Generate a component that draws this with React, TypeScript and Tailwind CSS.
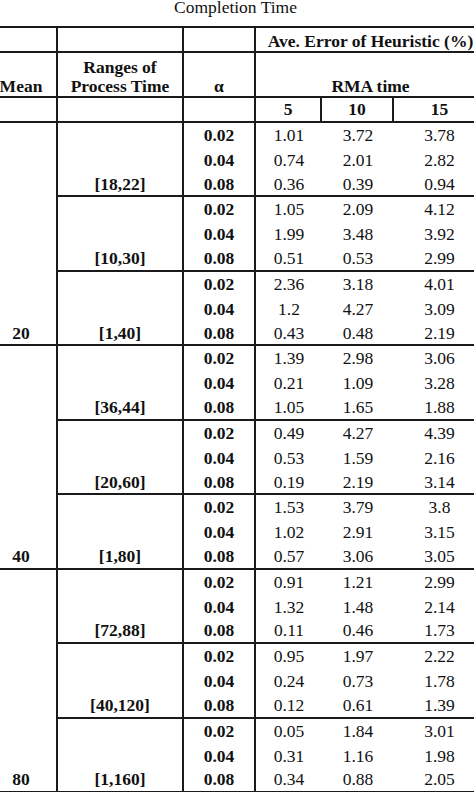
import React from "react";

type Group = { range: string; rows: [string, string, string, string][] };
type MeanGroup = { mean: string; groups: Group[] };

const data: MeanGroup[] = [
  {
    mean: "20",
    groups: [
      { range: "[18,22]", rows: [["0.02", "1.01", "3.72", "3.78"], ["0.04", "0.74", "2.01", "2.82"], ["0.08", "0.36", "0.39", "0.94"]] },
      { range: "[10,30]", rows: [["0.02", "1.05", "2.09", "4.12"], ["0.04", "1.99", "3.48", "3.92"], ["0.08", "0.51", "0.53", "2.99"]] },
      { range: "[1,40]", rows: [["0.02", "2.36", "3.18", "4.01"], ["0.04", "1.2", "4.27", "3.09"], ["0.08", "0.43", "0.48", "2.19"]] },
    ],
  },
  {
    mean: "40",
    groups: [
      { range: "[36,44]", rows: [["0.02", "1.39", "2.98", "3.06"], ["0.04", "0.21", "1.09", "3.28"], ["0.08", "1.05", "1.65", "1.88"]] },
      { range: "[20,60]", rows: [["0.02", "0.49", "4.27", "4.39"], ["0.04", "0.53", "1.59", "2.16"], ["0.08", "0.19", "2.19", "3.14"]] },
      { range: "[1,80]", rows: [["0.02", "1.53", "3.79", "3.8"], ["0.04", "1.02", "2.91", "3.15"], ["0.08", "0.57", "3.06", "3.05"]] },
    ],
  },
  {
    mean: "80",
    groups: [
      { range: "[72,88]", rows: [["0.02", "0.91", "1.21", "2.99"], ["0.04", "1.32", "1.48", "2.14"], ["0.08", "0.11", "0.46", "1.73"]] },
      { range: "[40,120]", rows: [["0.02", "0.95", "1.97", "2.22"], ["0.04", "0.24", "0.73", "1.78"], ["0.08", "0.12", "0.61", "1.39"]] },
      { range: "[1,160]", rows: [["0.02", "0.05", "1.84", "3.01"], ["0.04", "0.31", "1.16", "1.98"], ["0.08", "0.34", "0.88", "2.05"]] },
    ],
  },
];

export default function App() {
  return (
    <div
      className="w-[474px] h-[792px] overflow-hidden bg-white text-[#111] text-[17.5px] leading-[19px]"
      style={{ fontFamily: '"Liberation Serif", "Times New Roman", serif' }}
    >
      <div className="ml-[-14px] w-[499px]">
        <div className="h-[26px] leading-[14px] text-center">Completion Time</div>
        <div className="grid grid-cols-[72px_126px_72px_66px_72px_91px] grid-rows-[25px_45px_25px] auto-rows-[24.83px] border-t-2 border-[#1a1a1a]">
          {/* header row 1 */}
          <div className="col-start-1 border-r-2 border-b-2 border-[#1a1a1a]" />
          <div className="col-start-2 border-r-2 border-b-2 border-[#1a1a1a]" />
          <div className="col-start-3 border-r-2 border-b-2 border-[#1a1a1a]" />
          <div className="col-start-4 col-span-3 border-b-2 border-[#1a1a1a] flex items-end justify-center font-bold whitespace-nowrap">
            Ave. Error of Heuristic (%)
          </div>
          {/* header row 2 */}
          <div className="col-start-1 border-r-2 border-b-2 border-[#1a1a1a] flex items-end justify-center font-bold">Mean</div>
          <div className="col-start-2 border-r-2 border-b-2 border-[#1a1a1a] flex flex-col items-center justify-end font-bold">
            <span>Ranges of</span>
            <span>Process Time</span>
          </div>
          <div className="col-start-3 border-r-2 border-b-2 border-[#1a1a1a] flex items-end justify-center font-bold">α</div>
          <div className="col-start-4 col-span-3 border-b-2 border-[#1a1a1a] flex items-end justify-center font-bold">RMA time</div>
          {/* header row 3 */}
          <div className="col-start-1 border-r-2 border-b-2 border-[#1a1a1a]" />
          <div className="col-start-2 border-r-2 border-b-2 border-[#1a1a1a]" />
          <div className="col-start-3 border-r-2 border-b-2 border-[#1a1a1a]" />
          <div className="col-start-4 border-r-2 border-b-2 border-[#1a1a1a] flex items-center justify-center font-bold">5</div>
          <div className="col-start-5 border-r-2 border-b-2 border-[#1a1a1a] flex items-center justify-center font-bold">10</div>
          <div className="col-start-6 border-b-2 border-[#1a1a1a] flex items-center justify-center font-bold">15</div>

          {data.map((m) => (
            <React.Fragment key={m.mean}>
              <div className="col-start-1 row-span-9 border-r-2 border-b-2 border-[#1a1a1a] flex flex-col justify-end">
                <div className="h-[22.83px] flex items-center justify-center font-bold">{m.mean}</div>
              </div>
              {m.groups.map((g) => (
                <React.Fragment key={g.range}>
                  <div className="col-start-2 row-span-3 border-r-2 border-b-2 border-[#1a1a1a] flex flex-col justify-end">
                    <div className="h-[22.83px] flex items-center justify-center font-bold">{g.range}</div>
                  </div>
                  {g.rows.map((r, i) => {
                    const last = i === 2;
                    return (
                      <React.Fragment key={r[0]}>
                        <div
                          className={
                            last
                              ? "col-start-3 border-r-2 border-b-2 border-[#1a1a1a] flex items-center justify-center font-bold"
                              : "col-start-3 border-r-2 border-[#1a1a1a] flex items-center justify-center font-bold"
                          }
                        >
                          {r[0]}
                        </div>
                        {r.slice(1).map((v, j) => (
                          <div
                            key={j}
                            className={
                              last
                                ? "border-b-2 border-[#1a1a1a] flex items-center justify-center"
                                : "flex items-center justify-center"
                            }
                          >
                            {v}
                          </div>
                        ))}
                      </React.Fragment>
                    );
                  })}
                </React.Fragment>
              ))}
            </React.Fragment>
          ))}
        </div>
      </div>
    </div>
  );
}
